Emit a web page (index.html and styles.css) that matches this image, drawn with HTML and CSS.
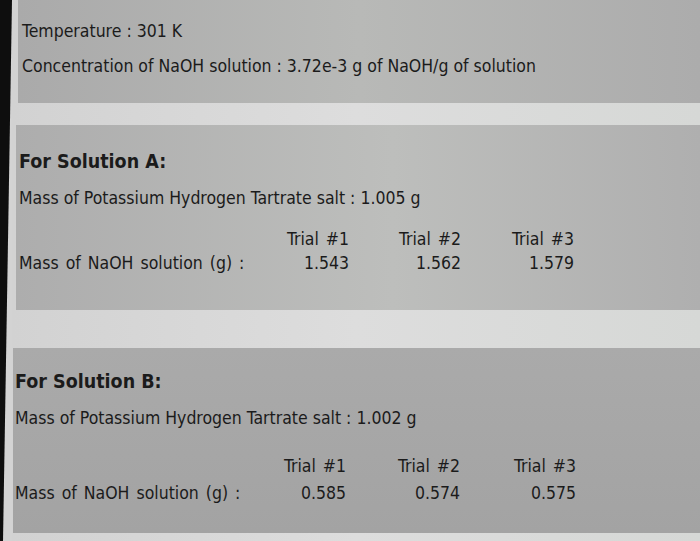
FILE: index.html
```html
<!DOCTYPE html>
<html lang="en">
<head>
<meta charset="utf-8">
<title>Titration data</title>
<link rel="stylesheet" href="styles.css">
</head>
<body>
<div class="bezel"></div>
<main class="screen">
  <section class="panel panel-top">
    <p class="line">Temperature : 301 K</p>
    <p class="line line-gap">Concentration of NaOH solution : 3.72e-3 g of NaOH/g of solution</p>
  </section>
  <div class="gap gap-1"></div>
  <section class="panel panel-a">
    <h2 class="heading">For Solution A:</h2>
    <p class="line">Mass of Potassium Hydrogen Tartrate salt : 1.005 g</p>
    <div class="trials">
      <span></span><span class="num">Trial #1</span><span class="num">Trial #2</span><span class="num">Trial #3</span>
      <span class="label">Mass of NaOH solution (g) :</span><span class="num">1.543</span><span class="num">1.562</span><span class="num">1.579</span>
    </div>
  </section>
  <div class="gap gap-2"></div>
  <section class="panel panel-b">
    <h2 class="heading">For Solution B:</h2>
    <p class="line">Mass of Potassium Hydrogen Tartrate salt : 1.002 g</p>
    <div class="trials">
      <span></span><span class="num">Trial #1</span><span class="num">Trial #2</span><span class="num">Trial #3</span>
      <span class="label">Mass of NaOH solution (g) :</span><span class="num">0.585</span><span class="num">0.574</span><span class="num">0.575</span>
    </div>
  </section>
  <div class="gap gap-3"></div>
</main>
</body>
</html>
```

FILE: styles.css
```css
html, body {
  margin: 0;
  padding: 0;
}
body {
  width: 700px;
  height: 541px;
  overflow: hidden;
  display: flex;
  background: #d3d3d3;
  font-family: "DejaVu Sans Condensed", "DejaVu Sans", sans-serif;
  color: #1b1b1b;
}
.bezel {
  width: 12px;
  flex: none;
  background: #0e0e0e;
  clip-path: polygon(0 0, 12px 0, 3px 100%, 0 100%);
}
.screen {
  flex: 1;
  display: flex;
  flex-direction: column;
  padding-left: 6px;
  background: linear-gradient(90deg, #d2d2d2 0%, #dddddd 50%, #d6d8d6 100%);
}
.panel {
  flex: none;
  box-sizing: border-box;
}
.panel-top {
  height: 103px;
  padding: 21px 0 0 4px;
  background: linear-gradient(90deg, #aaaaaa 0%, #b8b9b7 50%, #acacac 100%);
}
.panel-a {
  height: 185px;
  padding: 26px 0 0 3px;
  margin-left: -2px;
  background: linear-gradient(90deg, #adadad 0%, #bdbebc 55%, #afafaf 100%);
}
.panel-b {
  height: 185px;
  padding: 23px 0 0 2px;
  margin-left: -5px;
  background: linear-gradient(180deg, #aaaaaa 0%, #a3a3a3 100%);
}
.gap-1 { height: 22px; }
.gap-2 { height: 38px; }
.gap-3 { flex: 1; }
.line {
  margin: 0;
  font-size: 17.5px;
  line-height: 20px;
  white-space: nowrap;
}
.line-gap {
  margin-top: 15px;
}
.heading {
  margin: 0 0 15px;
  font-size: 19.5px;
  line-height: 22px;
  font-weight: bold;
}
.trials {
  display: grid;
  grid-template-columns: 265px 65px 112px 113px;
  row-gap: 4px;
  margin-top: 21px;
  font-size: 17.5px;
  line-height: 20px;
  word-spacing: 2px;
}
.panel-b .trials {
  grid-template-columns: 265px 66px 114px 116px;
  margin-top: 28px;
  row-gap: 7px;
}
.num {
  text-align: right;
  white-space: nowrap;
}
.label {
  white-space: nowrap;
}
```
